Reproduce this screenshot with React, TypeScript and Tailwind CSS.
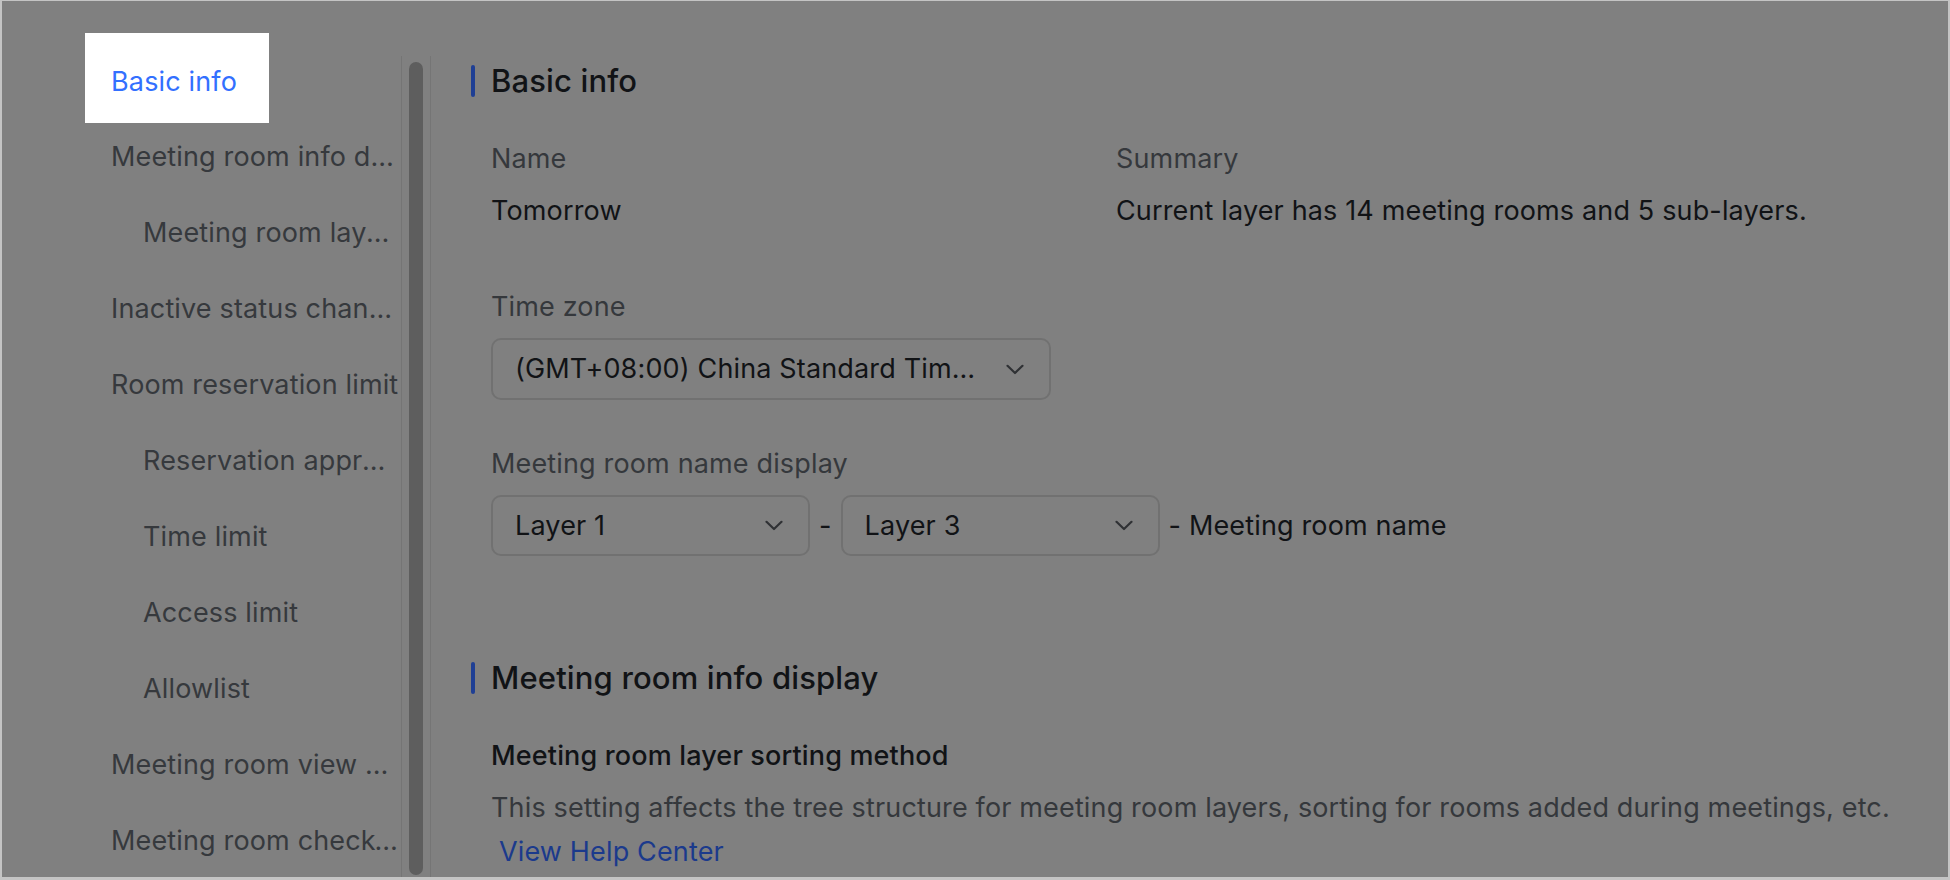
import React from "react";

function Chevron() {
  return (
    <svg width="18" height="11" viewBox="0 0 18 11" fill="none" className="shrink-0">
      <path d="M1.5 1.8 L9 9 L16.5 1.8" stroke="#2f3134" strokeWidth="2.2" strokeLinecap="round" strokeLinejoin="round" />
    </svg>
  );
}

function Select({ text, className, textClass = "" }: { text: string; className: string; textClass?: string }) {
  return (
    <div
      className={`flex items-center justify-between border-2 border-[#717171] rounded-[10px] pl-[22px] pr-[25px] ${className}`}
    >
      <span className={`truncate text-[27px] leading-[40px] text-[#111316] ${textClass}`}>{text}</span>
      <Chevron />
    </div>
  );
}

function SectionHeading({ title, className = "" }: { title: string; className?: string }) {
  return (
    <div className={`flex items-center gap-[16px] h-[32px] ${className}`}>
      <div className="w-[4px] h-[32px] rounded-full bg-[#1f3f94]" />
      <div className="text-[31px] leading-[40px] font-medium text-[#111316]">{title}</div>
    </div>
  );
}

const navItems: { label: string; level: number; active?: boolean }[] = [
  { label: "Basic info", level: 1, active: true },
  { label: "Meeting room info display", level: 1 },
  { label: "Meeting room layer sorting method", level: 2 },
  { label: "Inactive status change", level: 1 },
  { label: "Room reservation limit", level: 1 },
  { label: "Reservation approval", level: 2 },
  { label: "Time limit", level: 2 },
  { label: "Access limit", level: 2 },
  { label: "Allowlist", level: 2 },
  { label: "Meeting room view permissions", level: 1 },
  { label: "Meeting room check-in", level: 1 },
];

export default function App() {
  return (
    <div className="w-[1950px] h-[880px] overflow-hidden bg-[#808080] border-t border-l-2 border-r-2 border-b-[3px] border-[#c4c4c4] flex font-['Inter','Noto_Sans',sans-serif] tracking-[0.15px]">
      {/* Sidebar */}
      <div className="w-[397px] shrink-0 pt-[42px] pl-[109px]">
        {navItems.map((item) => (
          <div
            key={item.label}
            className={`relative h-[76px] flex items-center ${item.level === 2 ? "pl-[32px]" : ""}`}
          >
            {item.active && (
              <div className="absolute top-[-10px] bottom-[-4px] left-[-26px] w-[184px] bg-white" />
            )}
            <span
              className={`relative truncate text-[27px] leading-[40px] ${
                item.active ? "text-[#3370ff] pt-[2px]" : "text-[#36393d]"
              }`}
            >
              {item.label}
            </span>
          </div>
        ))}
      </div>

      {/* Scrollbar */}
      <div className="ml-[2px] w-[30px] shrink-0 mt-[55px] border-x border-[#757575] pt-[6px] pb-[2px] px-[7px] flex flex-col">
        <div className="w-[14px] flex-1 rounded-full bg-[#5e5e5e]" />
      </div>

      {/* Main */}
      <div className="flex-1 pl-[40px] pt-[64px] flex flex-col">
        <SectionHeading title="Basic info" />
        <div className="pl-[20px]">
          <div className="grid grid-cols-[625px_1fr] mt-[42px]">
            <div className="flex flex-col">
              <div className="text-[27px] leading-[40px] text-[#35383c]">Name</div>
              <div className="mt-[12px] text-[27px] leading-[40px] text-[#111316]">Tomorrow</div>
            </div>
            <div className="flex flex-col">
              <div className="text-[27px] leading-[40px] text-[#35383c]">Summary</div>
              <div className="mt-[12px] text-[27px] leading-[40px] text-[#111316] whitespace-nowrap">
                Current layer has 14 meeting rooms and 5 sub-layers.
              </div>
            </div>
          </div>

          <div className="mt-[56px] text-[27px] leading-[40px] text-[#35383c]">Time zone</div>
          <Select
            text="(GMT+08:00) China Standard Time - Beijing"
            className="mt-[11px] w-[560px] h-[62px]"
            textClass="w-[462px]"
          />

          <div className="mt-[44px] text-[27px] leading-[40px] text-[#35383c]">Meeting room name display</div>
          <div className="mt-[11px] flex items-center gap-[9px]">
            <Select text="Layer 1" className="w-[319px] h-[61px]" />
            <span className="text-[27px] leading-[40px] text-[#111316]">-</span>
            <Select text="Layer 3" className="w-[319px] h-[61px]" />
            <span className="text-[27px] leading-[40px] text-[#111316] whitespace-nowrap">- Meeting room name</span>
          </div>
        </div>

        <SectionHeading title="Meeting room info display" className="mt-[106px]" />
        <div className="pl-[20px]">
          <div className="mt-[42px] text-[27px] leading-[40px] font-medium text-[#111316]">
            Meeting room layer sorting method
          </div>
          <div className="mt-[12px] text-[27px] leading-[40px] text-[#35383c] whitespace-nowrap">
            This setting affects the tree structure for meeting room layers, sorting for rooms added during meetings, etc.
          </div>
          <div className="mt-[4px] pl-[8px] text-[27px] leading-[40px] text-[#1b3a8c]">View Help Center</div>
        </div>
      </div>
    </div>
  );
}
